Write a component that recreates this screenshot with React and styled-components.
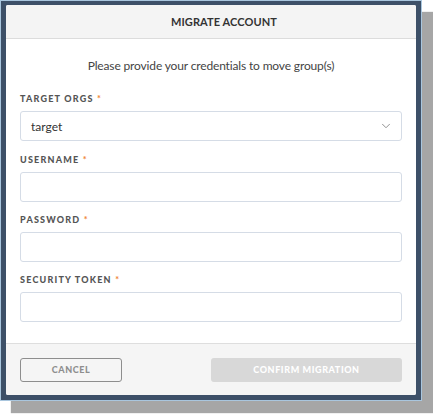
import React from 'react'
import styled, { createGlobalStyle } from 'styled-components'
import { ChevronDown } from 'lucide-react'

const GlobalStyle = createGlobalStyle`
    html, body {
        margin: 0;
        padding: 0;
        background: #fff;
    }
    body {
        font-family: Lato, "Liberation Sans", sans-serif;
        color: #333;
    }
`

const fields = [
    { label: 'USERNAME', type: 'text' },
    { label: 'PASSWORD', type: 'password' },
    { label: 'SECURITY TOKEN', type: 'password' },
]

const App = () => {
    return (
        <>
            <GlobalStyle />
            <Page>
                <Frame>
                    <Card>
                        <Header>MIGRATE ACCOUNT</Header>
                        <Body>
                            <Intro>Please provide your credentials to move group(s)</Intro>
                            <Field $first>
                                <Label>TARGET ORGS <Req>*</Req></Label>
                                <SelectBox>
                                    <span>target</span>
                                    <ChevronDown size={14} strokeWidth={1.6} />
                                </SelectBox>
                            </Field>
                            {fields.map((f) => (
                                <Field key={f.label}>
                                    <Label>{f.label} <Req>*</Req></Label>
                                    <Input type={f.type} />
                                </Field>
                            ))}
                        </Body>
                        <Footer>
                            <CancelBtn>CANCEL</CancelBtn>
                            <ConfirmBtn disabled>CONFIRM MIGRATION</ConfirmBtn>
                        </Footer>
                    </Card>
                </Frame>
            </Page>
        </>
    )
}

const Page = styled.div`
    width: 433px;
    height: 415px;
`

const Frame = styled.div`
    box-sizing: border-box;
    width: 422px;
    height: 401px;
    background: #3d5068;
    border: 1px solid #a9c6de;
    padding: 4px 5px 5px 5px;
    box-shadow: 11px 12px 1px #a6a6a6;
`

const Card = styled.div`
    display: flex;
    flex-direction: column;
    height: 100%;
    background: #fff;
    border-radius: 2px;
    overflow: hidden;
`

const Header = styled.div`
    height: 33px;
    display: flex;
    align-items: center;
    justify-content: center;
    padding-left: 26px;
    background: #f4f4f4;
    border-bottom: 1px solid #dcdcdc;
    font-size: 11px;
    font-weight: 700;
    color: #333;
    letter-spacing: 0.1px;
`

const Body = styled.div`
    flex: 1;
    padding: 19px 14px 0 14px;
`

const Intro = styled.div`
    text-align: center;
    font-size: 12px;
    line-height: 16px;
    letter-spacing: -0.15px;
    color: #444;
    margin-bottom: 19px;
`

const Field = styled.div`
    display: flex;
    flex-direction: column;
    gap: 6px;
    margin-bottom: ${(p) => (p.$first ? '13px' : '12px')};
`

const Label = styled.div`
    font-size: 9px;
    line-height: 12px;
    font-weight: 900;
    letter-spacing: 1.2px;
    color: #555;
`

const Req = styled.span`
    color: #f0883a;
    letter-spacing: 0;
`

const boxStyles = `
    box-sizing: border-box;
    width: 100%;
    height: 30px;
    border: 1px solid #d5dce6;
    border-radius: 3px;
    background: #fff;
`

const SelectBox = styled.div`
    ${boxStyles}
    display: flex;
    align-items: center;
    justify-content: space-between;
    padding: 0 8px 0 10px;
    font-size: 12px;
    color: #333;
    svg {
        color: #8a8a8a;
    }
`

const Input = styled.input`
    ${boxStyles}
    padding: 0 10px;
    font-family: inherit;
    font-size: 12px;
    &:focus {
        outline: none;
    }
`

const Footer = styled.div`
    height: 52px;
    box-sizing: border-box;
    display: flex;
    align-items: center;
    justify-content: space-between;
    padding: 0 14px;
    background: #f5f5f5;
    border-top: 1px solid #dedede;
`

const Btn = styled.button`
    height: 24px;
    box-sizing: border-box;
    border-radius: 3px;
    font-family: inherit;
    font-size: 9px;
    font-weight: 900;
    letter-spacing: 0.6px;
    padding: 0;
`

const CancelBtn = styled(Btn)`
    width: 102px;
    background: transparent;
    border: 1px solid #8e8e8e;
    color: #8e8e8e;
`

const ConfirmBtn = styled(Btn)`
    width: 191px;
    background: #d8d8d8;
    border: none;
    color: #fff;
`

export default App
